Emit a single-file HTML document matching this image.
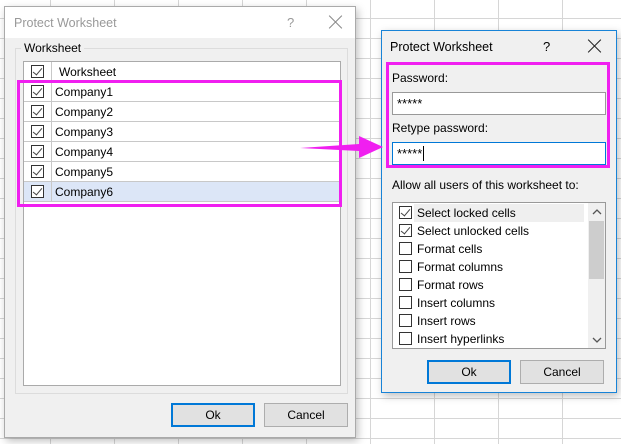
<!DOCTYPE html>
<html><head><style>
*{margin:0;padding:0;box-sizing:border-box}
body{width:621px;height:444px;overflow:hidden;position:relative;background:#fff;font-family:"Liberation Sans",sans-serif;font-size:12px;color:#000}
.grid{position:absolute;inset:0;background-image:linear-gradient(to right,#d6d6d6 1px,transparent 1px),linear-gradient(to bottom,#d6d6d6 1px,transparent 1px);background-size:64px 20px;background-position:50px 18px}
.abs{position:absolute}
.dlg{position:absolute;background:#f0f0f0;box-shadow:2px 3px 8px rgba(0,0,0,.25)}
.cb{position:absolute;width:13px;height:13px;border:1px solid #333;background:#fff}
.cb.on::after{content:"";position:absolute;left:3px;top:0px;width:4px;height:8px;border:solid #444;border-width:0 1.3px 1.3px 0;transform:rotate(40deg)}
.row{position:absolute;left:0;width:317px;height:20px;border-bottom:1px solid #c8c8c8}
.row .c{position:absolute;left:27px;top:0;bottom:0;border-left:1px solid #c8c8c8}
.row span{position:absolute;left:31px;top:3px}
.btn{position:absolute;width:84px;height:24px;background:#e1e1e1;border:1px solid #adadad;text-align:center;line-height:22px}
.btn.def{border:2px solid #0078d7;line-height:20px}
.it{position:absolute;left:6px;height:18px;width:184px}
.it .cb{left:0;top:2px}
.it span{position:absolute;left:18px;top:2px}
.x{position:absolute;width:14px;height:14px}
.x::before,.x::after{content:"";position:absolute;left:6px;top:-2px;width:1px;height:18px;background:currentColor;transform:rotate(45deg)}
.x::after{transform:rotate(-45deg)}
</style></head><body>
<div class="grid"></div>

<!-- left dialog -->
<div class="dlg" style="left:4px;top:6px;width:352px;height:432px;border:1px solid #aaa">
  <div class="abs" style="left:0;top:0;width:350px;height:31px;background:#fff"></div>
  <div class="abs" style="left:9px;top:9px;color:#999;font-size:12.5px">Protect Worksheet</div>
  <div class="abs" style="left:282px;top:8px;color:#999;font-size:13px">?</div>
  <div class="x" style="left:324px;top:8px;color:#888"></div>
  <div class="abs" style="left:10px;top:41px;width:333px;height:346px;border:1px solid #dcdcdc"></div>
  <div class="abs" style="left:16px;top:34px;background:#f0f0f0;padding:0 3px">Worksheet</div>
  <div class="abs" style="left:18px;top:54px;width:318px;height:325px;background:#fff;border:1px solid #aaa">
    <div class="row" style="top:0"><div class="cb on" style="left:7px;top:3px"></div><div class="c"></div><span style="left:35px">Worksheet</span></div>
    <div class="row" style="top:20px"><div class="cb on" style="left:7px;top:3px"></div><div class="c"></div><span>Company1</span></div>
    <div class="row" style="top:40px"><div class="cb on" style="left:7px;top:3px"></div><div class="c"></div><span>Company2</span></div>
    <div class="row" style="top:60px"><div class="cb on" style="left:7px;top:3px"></div><div class="c"></div><span>Company3</span></div>
    <div class="row" style="top:80px"><div class="cb on" style="left:7px;top:3px"></div><div class="c"></div><span>Company4</span></div>
    <div class="row" style="top:100px"><div class="cb on" style="left:7px;top:3px"></div><div class="c"></div><span>Company5</span></div>
    <div class="row" style="top:120px;background:#dce6f7"><div class="cb on" style="left:7px;top:3px"></div><div class="c"></div><span>Company6</span></div>
  </div>
  <div class="btn def" style="left:166px;top:396px">Ok</div>
  <div class="btn" style="left:259px;top:396px">Cancel</div>
</div>
<div class="abs" style="left:17px;top:80px;width:325px;height:127px;border:3px solid #f01ff0"></div>

<!-- right dialog -->
<div class="dlg" style="left:381px;top:30px;width:236px;height:363px;border:1px solid #1883d7">
  <div class="abs" style="left:8px;top:9px;font-size:12.5px">Protect Worksheet</div>
  <div class="abs" style="left:161px;top:8px;font-size:13px">?</div>
  <div class="x" style="left:206px;top:8px;color:#222"></div>
  <div class="abs" style="left:10px;top:40px">Password:</div>
  <div class="abs" style="left:10px;top:61px;width:214px;height:23px;background:#fff;border:1px solid #999;padding:3px 4px;font-size:13px">*****</div>
  <div class="abs" style="left:10px;top:90px">Retype password:</div>
  <div class="abs" style="left:10px;top:111px;width:214px;height:23px;background:#fff;border:1px solid #0078d7;padding:3px 4px;font-size:13px">*****<span style="border-left:1px solid #000;margin-left:1px"></span></div>
  <div class="abs" style="left:10px;top:147px">Allow all users of this worksheet to:</div>
  <div class="abs" style="left:10px;top:171px;width:214px;height:147px;background:#fff;border:1px solid #999;overflow:hidden">
    <div class="abs" style="left:21px;top:1px;width:170px;height:18px;background:#efefef"></div>
    <div class="it" style="top:1px"><div class="cb on"></div><span>Select locked cells</span></div>
    <div class="it" style="top:19px"><div class="cb on"></div><span>Select unlocked cells</span></div>
    <div class="it" style="top:37px"><div class="cb"></div><span>Format cells</span></div>
    <div class="it" style="top:55px"><div class="cb"></div><span>Format columns</span></div>
    <div class="it" style="top:73px"><div class="cb"></div><span>Format rows</span></div>
    <div class="it" style="top:91px"><div class="cb"></div><span>Insert columns</span></div>
    <div class="it" style="top:109px"><div class="cb"></div><span>Insert rows</span></div>
    <div class="it" style="top:127px"><div class="cb"></div><span>Insert hyperlinks</span></div>
    <div class="abs" style="left:195px;top:0;width:17px;height:145px;background:#f0f0f0"></div>
    <div class="abs" style="left:196px;top:18px;width:15px;height:58px;background:#cdcdcd"></div>
    <svg class="abs" style="left:199px;top:6px" width="10" height="6"><path d="M1 5 L5 1 L9 5" fill="none" stroke="#555" stroke-width="1.3"/></svg>
    <svg class="abs" style="left:199px;top:134px" width="10" height="6"><path d="M1 1 L5 5 L9 1" fill="none" stroke="#555" stroke-width="1.3"/></svg>
  </div>
  <div class="btn def" style="left:45px;top:329px">Ok</div>
  <div class="btn" style="left:138px;top:329px">Cancel</div>
</div>
<div class="abs" style="left:386px;top:62px;width:224px;height:106px;border:3px solid #f01ff0"></div>

<svg class="abs" style="left:0;top:0" width="621" height="444"><polygon points="300,148 359,144 359,136 383,147 359,158 359,151" fill="#f01ff0"/></svg>
</body></html>
